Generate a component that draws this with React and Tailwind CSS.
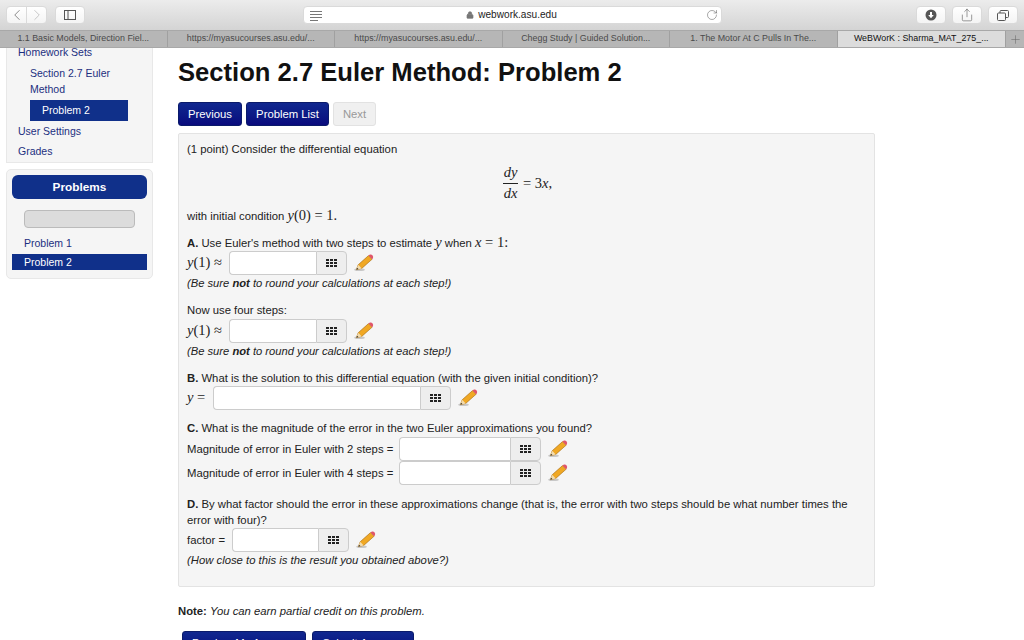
import React from "react";
import { ChevronLeft, ChevronRight, Lock, RotateCw, Share, Plus } from "lucide-react";

const TABS = [
  "1.1 Basic Models, Direction Fiel...",
  "https://myasucourses.asu.edu/...",
  "https://myasucourses.asu.edu/...",
  "Chegg Study | Guided Solution...",
  "1. The Motor At C Pulls In The...",
];

const Pencil = () => (
  <svg width="20" height="18" viewBox="0 0 22 20" className="shrink-0">
    <ellipse cx="6" cy="17.5" rx="6" ry="1.5" fill="#c8c8c8" />
    <path d="M2.5 17.5 L4.5 12 L16 1.8 L20 5.8 L8.5 16 Z" fill="#f0a824" stroke="#a9701a" strokeWidth="0.7" />
    <path d="M4.5 12 L8.5 16 L2.5 17.5 Z" fill="#f3dcae" />
    <path d="M2.5 17.5 L3.4 15.2 L4.8 16.6 Z" fill="#333" />
    <path d="M16 1.8 L17.6 0.6 Q19.2 0 20.6 1.6 Q21.6 3 20.9 4.6 L20 5.8 Z" fill="#e0566a" />
  </svg>
);

// the answer box with its keypad button and the pencil next to it
const Answer = ({ inputWidth }) => (
  <div className="flex items-center">
    <div className={`${inputWidth} h-6 bg-white border border-[#ccc] rounded-l-[4px] border-r-0`} />
    <div className="w-[31px] h-6 bg-[#eee] border border-[#ccc] rounded-r-[4px] flex items-center justify-center">
      <svg width="11" height="8" viewBox="0 0 11 8" fill="#222">
        <rect x="0" y="0" width="3" height="2" />
        <rect x="4" y="0" width="3" height="2" />
        <rect x="8" y="0" width="3" height="2" />
        <rect x="0" y="3" width="3" height="2" />
        <rect x="4" y="3" width="3" height="2" />
        <rect x="8" y="3" width="3" height="2" />
        <rect x="0" y="6" width="3" height="2" />
        <rect x="4" y="6" width="3" height="2" />
        <rect x="8" y="6" width="3" height="2" />
      </svg>
    </div>
    <div className="ml-[7px]">
      <Pencil />
    </div>
  </div>
);

const M = ({ children }) => (
  <span className="font-['Liberation_Serif',serif] text-[14.5px] leading-none">{children}</span>
);

const V = ({ children }) => (
  <i className="font-['Liberation_Serif',serif] text-[14.5px] leading-none">{children}</i>
);

const Hint = () => (
  <p className="italic text-[11.2px] h-[16px] leading-[16px] whitespace-nowrap">
    (Be sure <b>not</b> to round your calculations at each step!)
  </p>
);

const NavyButton = ({ children, width }) => (
  <div className={`${width} h-6 rounded-[3px] border border-[#0a1a6a] bg-gradient-to-b from-[#10278f] to-[#0a0a7d] text-white flex items-center justify-center`}>
    {children}
  </div>
);

const ToolButton = ({ children, width = "w-[30px]" }) => (
  <div className={`${width} h-[18px] bg-gradient-to-b from-white to-[#f4f4f4] rounded-[4px] border border-[#dadada] flex items-center justify-center text-[#555]`}>
    {children}
  </div>
);

export default function App() {
  return (
    <div className="w-[1024px] h-[640px] overflow-hidden flex flex-col bg-white font-['Liberation_Sans',Arial,sans-serif] text-[11.3px] text-[#222]">
      {/* browser toolbar */}
      <div className="h-[30px] shrink-0 bg-gradient-to-b from-[#ececec] to-[#d4d4d4] flex items-center pl-[6px] pr-[6px]">
        <div className="flex w-[41px] h-[18px] bg-gradient-to-b from-white to-[#f4f4f4] rounded-[4px] border border-[#dadada]">
          <div className="flex-1 flex items-center justify-center border-r border-[#dadada] text-[#666]">
            <ChevronLeft size={18} strokeWidth={1} />
          </div>
          <div className="flex-1 flex items-center justify-center text-[#b5b5b5]">
            <ChevronRight size={18} strokeWidth={1} />
          </div>
        </div>
        <div className="ml-2">
          <ToolButton>
            <svg width="12" height="10" viewBox="0 0 12 10" fill="none" stroke="#555" strokeWidth="1">
              <rect x="0.5" y="0.5" width="11" height="9" />
              <path d="M4 0.5 V9.5" />
            </svg>
          </ToolButton>
        </div>
        <div className="ml-[218px] w-[419px] h-[18px] bg-white rounded-[4px] border border-[#dadada] flex items-center relative">
          <div className="absolute left-[6px] top-[4px] w-[12px] flex flex-col gap-[2px]">
            <div className="h-px bg-[#777]" />
            <div className="h-px bg-[#777]" />
            <div className="h-px bg-[#777]" />
            <div className="h-px w-[8px] bg-[#777]" />
          </div>
          <div className="flex-1 flex items-center justify-center gap-1 text-[10.1px] text-[#222] pr-[2px]">
            <Lock size={8} fill="#777" stroke="#777" />
            webwork.asu.edu
          </div>
          <RotateCw size={12} strokeWidth={1} className="absolute right-[3px] top-[2px] text-[#555]" />
        </div>
        <div className="ml-auto flex gap-[6px]">
          <ToolButton>
            <svg width="12" height="12" viewBox="0 0 12 12">
              <circle cx="6" cy="6" r="5.5" fill="#555" />
              <path d="M5 3 H7 V6 H8.8 L6 9.2 L3.2 6 H5 Z" fill="#fff" />
            </svg>
          </ToolButton>
          <ToolButton>
            <Share size={14} strokeWidth={1} />
          </ToolButton>
          <ToolButton>
            <svg width="12" height="11" viewBox="0 0 12 11" fill="none" stroke="#555" strokeWidth="1">
              <rect x="0.5" y="3" width="8" height="7.5" rx="1" />
              <path d="M3 3 V1.5 Q3 0.5 4 0.5 H10.5 Q11.5 0.5 11.5 1.5 V6.5 Q11.5 7.5 10.5 7.5 H8.5" />
            </svg>
          </ToolButton>
        </div>
      </div>

      {/* tab strip */}
      <div className="h-[18px] shrink-0 flex bg-[#b6b6b6] border-t border-[#a8a8a8] border-b text-[8.9px] text-[#4a4a4a] relative z-10">
        {TABS.map((tab, i) => (
          <div key={i} className="w-[167.5px] flex items-center justify-center border-r border-[#a0a0a0] whitespace-nowrap">
            {tab}
          </div>
        ))}
        <div className="w-[167.5px] flex items-center justify-center bg-[#dcdcdc] text-[#111]">
          WeBWorK : Sharma_MAT_275_...
        </div>
        <div className="flex-1 flex items-center justify-center border-l border-[#a0a0a0] text-[#666]">
          <Plus size={13} strokeWidth={1} />
        </div>
      </div>

      <div className="flex-1 flex min-h-0">
        {/* left column */}
        <div className="w-[147px] ml-[6px] shrink-0 text-[10.5px] text-[#1c2f80]">
          <div className="-mt-[4px] bg-[#f5f5f5] border border-t-0 border-[#e8e8e8] h-[119px] pl-[11px]">
            <div className="h-[16px] leading-[16px]">Homework Sets</div>
            <div className="mt-[5px] pl-[12px] leading-[16px]">
              Section 2.7 Euler
              <br />
              Method
            </div>
            <div className="mt-[3px] ml-[12px] w-[98px] h-[21px] leading-[21px] bg-[#10308a] text-white pl-[12px]">
              Problem 2
            </div>
            <div className="h-[20px] leading-[20px]">User Settings</div>
            <div className="h-[20px] leading-[20px]">Grades</div>
          </div>
          <div className="mt-[6px] bg-[#f5f5f5] border border-[#e8e8e8] rounded-[5px] h-[110px] px-[5px] pt-[5px]">
            <div className="h-6 pt-px rounded-[6px] bg-[#10308a] text-white font-bold text-[11.8px] flex items-center justify-center">
              Problems
            </div>
            <div className="mx-[12px] mt-[11px] h-[18px] bg-[#dcdcdc] border border-[#bbb] rounded-[4px]" />
            <div className="mt-[6px] h-[18px] leading-[18px] pl-[12px]">Problem 1</div>
            <div className="h-[16px] leading-[16px] mt-[2px] pl-[12px] bg-[#10308a] text-white">Problem 2</div>
          </div>
        </div>

        {/* main column */}
        <div className="ml-[25px] w-[697px] shrink-0">
          <h1 className="mt-[8px] h-[32px] leading-[32px] text-[25.6px] font-bold text-[#111]">
            Section 2.7 Euler Method: Problem 2
          </h1>
          <div className="mt-[14px] flex gap-1">
            <NavyButton width="w-[64px]">Previous</NavyButton>
            <NavyButton width="w-[83px]">Problem List</NavyButton>
            <div className="w-[43px] h-6 rounded-[3px] border border-[#e2e2e2] bg-[#f0f0f0] text-[#999] flex items-center justify-center">
              Next
            </div>
          </div>

          <div className="mt-[7px] h-[454px] bg-[#f5f5f5] border border-[#e3e3e3] rounded-[2px] pl-[8px] pt-[7px] leading-[16px]">
            <p>(1 point) Consider the differential equation</p>

            <div className="mt-[6px] h-[41px] flex items-center pl-[316px]">
              <div className="flex flex-col items-center mr-[5px]">
                <div className="h-[20px] leading-[20px]"><V>dy</V></div>
                <div className="w-[15px] h-px bg-[#222]" />
                <div className="h-[20px] leading-[20px]"><V>dx</V></div>
              </div>
              <M>
                = 3<i>x</i>,
              </M>
            </div>

            <p className="mt-[4px]">
              with initial condition <M><i>y</i>(0) = 1.</M>
            </p>

            <p className="mt-[11px]">
              <b>A.</b> Use Euler's method with two steps to estimate <V>y</V> when <M><i>x</i> = 1:</M>
            </p>
            <div className="flex items-center h-6">
              <div className="w-[42px]"><M><i>y</i>(1) ≈</M></div>
              <Answer inputWidth="w-[87px]" />
            </div>
            <Hint />

            <p className="mt-[11px]">Now use four steps:</p>
            <div className="flex items-center h-6 mt-[1px]">
              <div className="w-[42px]"><M><i>y</i>(1) ≈</M></div>
              <Answer inputWidth="w-[87px]" />
            </div>
            <Hint />

            <p className="mt-[11px]">
              <b>B.</b> What is the solution to this differential equation (with the given initial condition)?
            </p>
            <div className="flex items-center h-6">
              <div className="w-[26px]"><M><i>y</i> =</M></div>
              <Answer inputWidth="w-[207px]" />
            </div>

            <p className="mt-[10px]">
              <b>C.</b> What is the magnitude of the error in the two Euler approximations you found?
            </p>
            <div className="flex items-center h-6 mt-[1px]">
              <div className="w-[212px] whitespace-nowrap">Magnitude of error in Euler with 2 steps =</div>
              <Answer inputWidth="w-[111px]" />
            </div>
            <div className="flex items-center h-6">
              <div className="w-[212px] whitespace-nowrap">Magnitude of error in Euler with 4 steps =</div>
              <Answer inputWidth="w-[111px]" />
            </div>

            <p className="mt-[11px] w-[680px]">
              <b>D.</b> By what factor should the error in these approximations change (that is, the error with two steps should be what number times the error with four)?
            </p>
            <div className="flex items-center h-6">
              <div className="w-[45px] whitespace-nowrap">factor =</div>
              <Answer inputWidth="w-[86px]" />
            </div>
            <p className="italic">(How close to this is the result you obtained above?)</p>
          </div>

          <p className="mt-[16px] leading-[16px]">
            <b>Note:</b> <i>You can earn partial credit on this problem.</i>
          </p>
          <div className="mt-[12px] ml-[4px] flex gap-[6px]">
            <NavyButton width="w-[124px]">Preview My Answers</NavyButton>
            <NavyButton width="w-[102px]">Submit Answers</NavyButton>
          </div>
        </div>
      </div>
    </div>
  );
}
